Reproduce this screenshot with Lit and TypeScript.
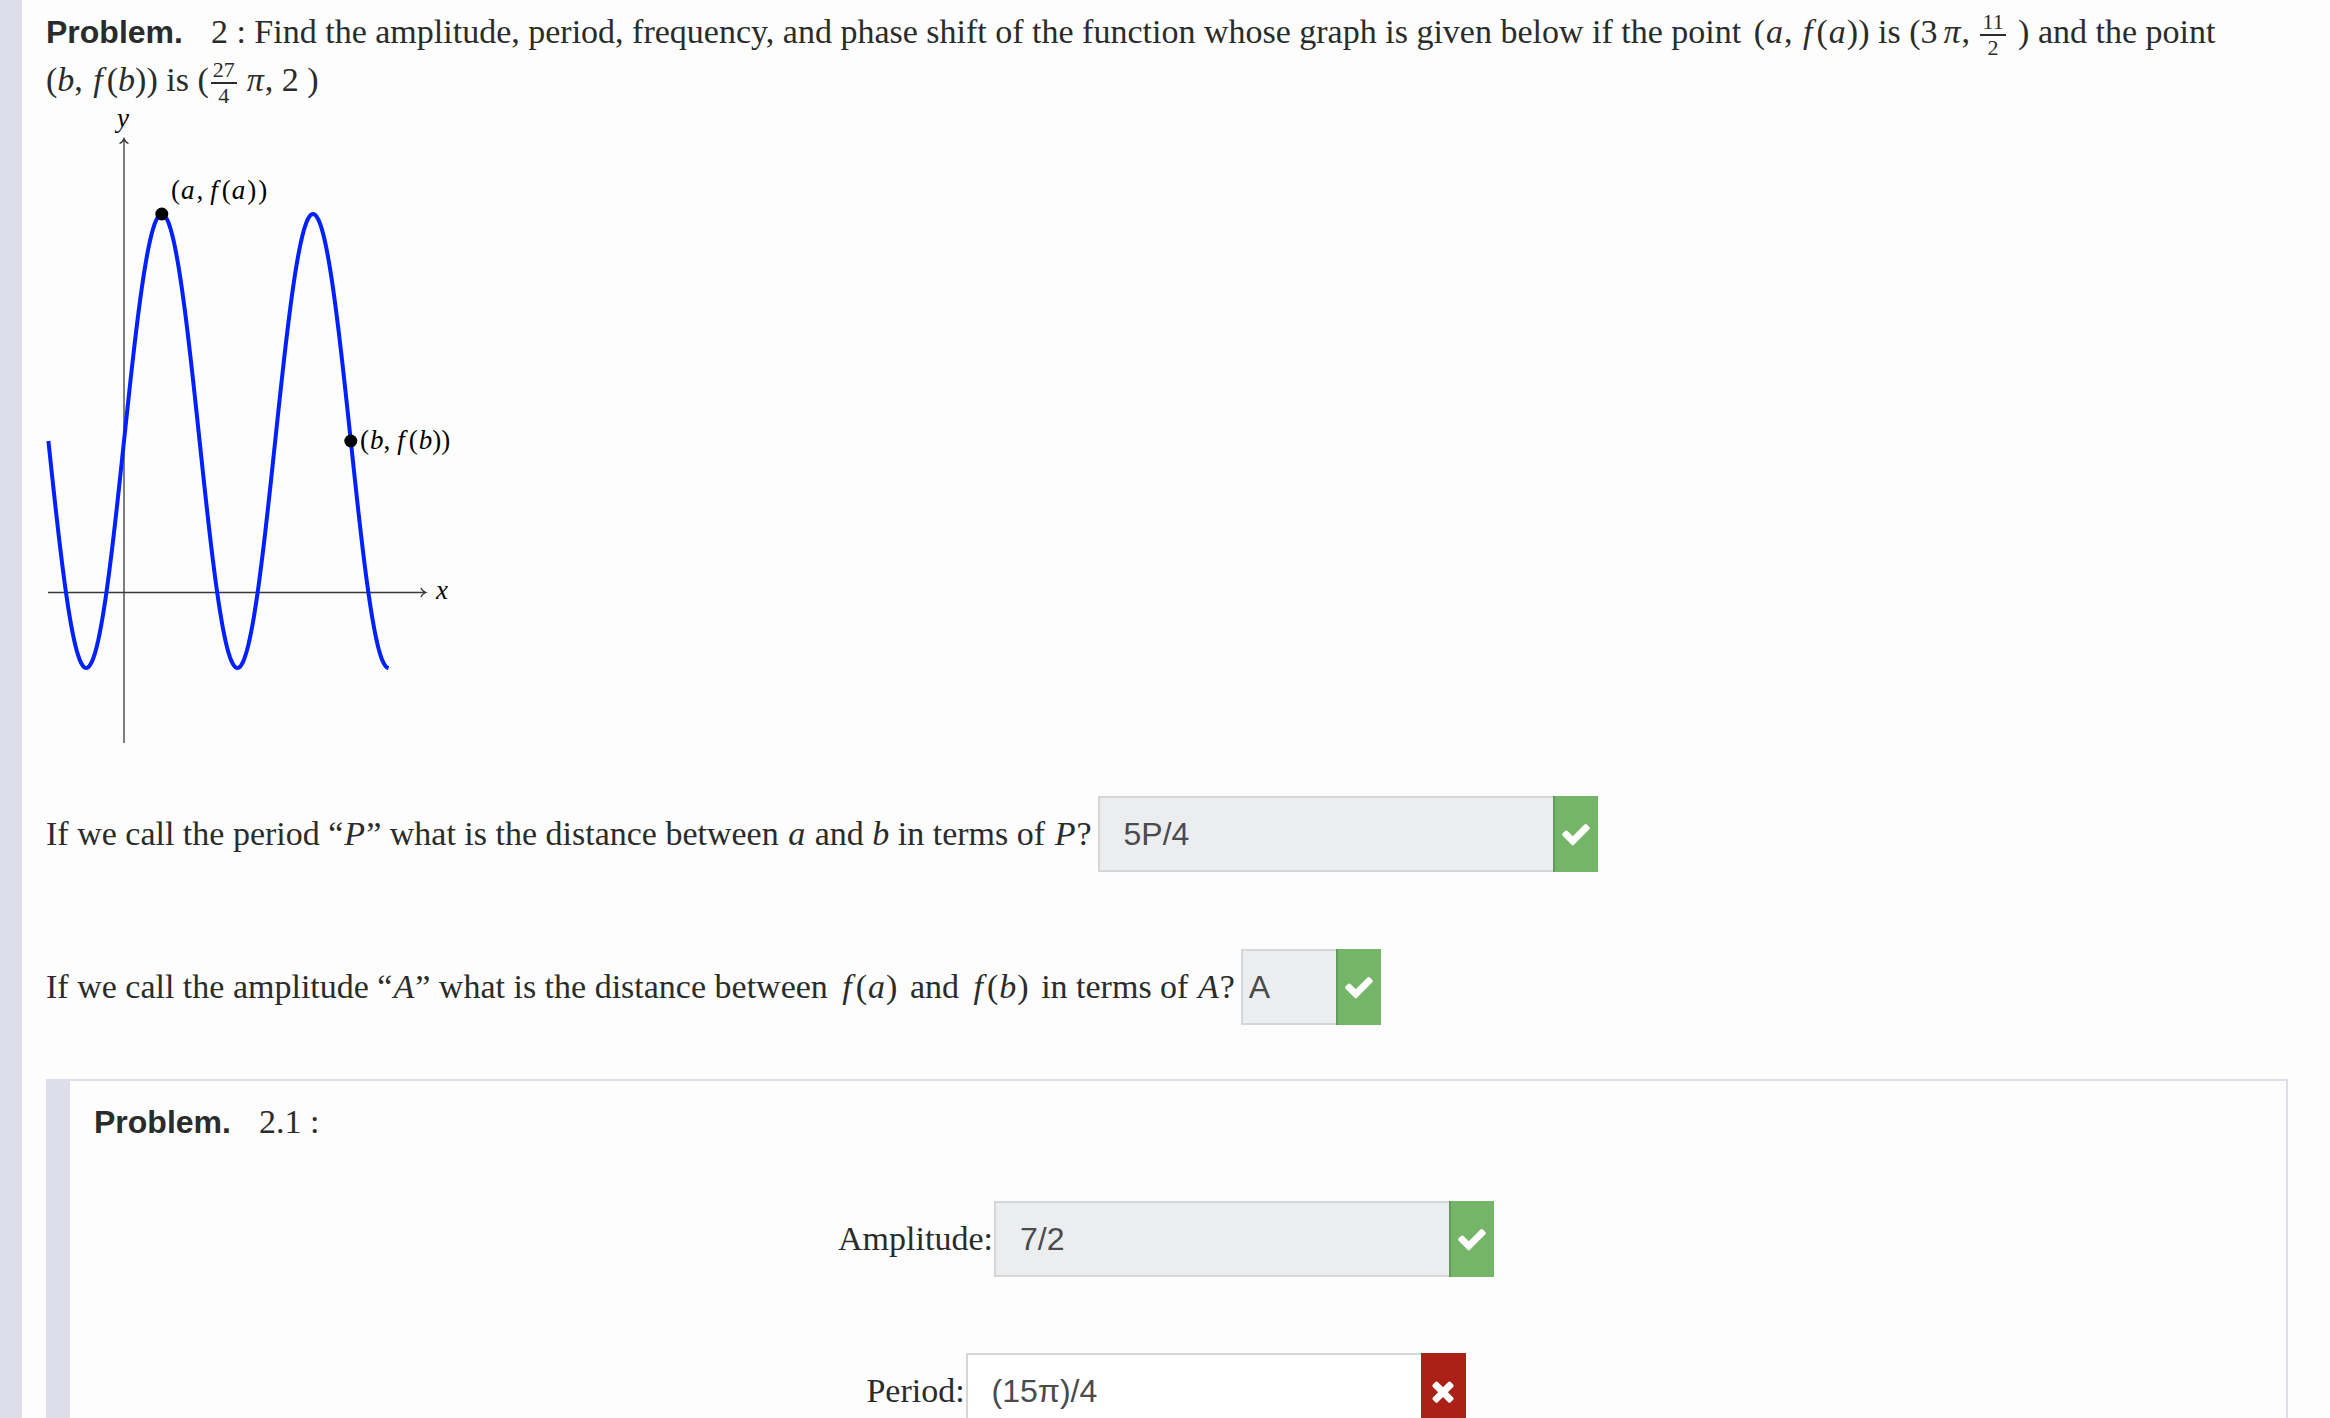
import { LitElement, html, css, svg } from "lit";
import { customElement, property } from "lit/decorators.js";

const CHECK =
  "M1671 566q0 40-28 68l-724 724-136 136q-28 28-68 28t-68-28l-136-136-362-362q-28-28-28-68t28-68l136-136q28-28 68-28t68 28l294 295 656-657q28-28 68-28t68 28l136 136q28 28 28 68z";
const CROSS =
  "M1490 1322q0 40-28 68l-136 136q-28 28-68 28t-68-28l-294-294-294 294q-28 28-68 28t-68-28l-136-136q-28-28-28-68t28-68l294-294-294-294q-28-28-28-68t28-68l136-136q28-28 68-28t68 28l294 294 294-294q28-28 68-28t68 28l136 136q28 28 28 68t-28 68l-294 294 294 294q28 28 28 68z";

/** A text answer with its label and a correct / incorrect mark on the right. */
@customElement("answer-field")
export class AnswerField extends LitElement {
  @property() value = "";
  @property({ type: Boolean }) correct = false;
  @property({ type: Boolean }) short = false;
  @property({ type: Boolean }) tight = false;

  static styles = css`
    :host {
      display: flex;
      align-items: center;
    }
    .label {
      margin-right: 6px;
      white-space: nowrap;
    }
    .label.tight {
      margin-right: 1px;
    }
    .group {
      display: flex;
      height: 76px;
    }
    .box {
      box-sizing: border-box;
      width: 455px;
      height: 76px;
      margin: 0;
      padding: 0 24px;
      border: 2px solid #d5d6d7;
      border-right: 0;
      border-radius: 0;
      background: #fff;
      color: #494b4f;
      font: 32px "Liberation Sans", Arial, sans-serif;
      outline: none;
    }
    .box.locked {
      background: #ecedef;
    }
    .box.short {
      width: 95px;
      padding: 0 6px;
    }
    .mark {
      box-sizing: border-box;
      display: flex;
      align-items: center;
      justify-content: center;
      width: 45px;
      height: 76px;
      padding: 0;
      border: 0;
      background: #ab2117;
    }
    .mark.correct {
      border-left: 2px solid #62995c;
      background: #74b567;
    }
    .icon {
      flex: none;
      width: 32px;
      height: 32px;
      fill: #fff;
    }
  `;

  render() {
    return html`
      <label class="label ${this.tight ? "tight" : ""}" for="answer"><slot></slot></label>
      <div class="group">
        <input
          id="answer"
          type="text"
          class="box ${this.correct ? "locked" : ""} ${this.short ? "short" : ""}"
          .value=${this.value}
          ?readonly=${this.correct}
        />
        <button
          type="button"
          class="mark ${this.correct ? "correct" : ""}"
          aria-label=${this.correct ? "Correct" : "Incorrect"}
        >
          <svg class="icon" viewBox="0 0 1792 1792" aria-hidden="true">
            <path d=${this.correct ? CHECK : CROSS} />
          </svg>
        </button>
      </div>
    `;
  }
}

const PERIOD = 151.2;
const AMPLITUDE = 227;
const MID = 333;
const ORIGIN = 78;

/** Samples the sine wave between two x positions of the drawing. */
function wave(from: number, to: number): string {
  const points: string[] = [];
  const steps = 240;
  for (let i = 0; i <= steps; i++) {
    const x = from + ((to - from) * i) / steps;
    const y = MID - AMPLITUDE * Math.sin((2 * Math.PI * (x - ORIGIN)) / PERIOD);
    points.push(`${x.toFixed(2)},${y.toFixed(2)}`);
  }
  return points.join(" ");
}

@customElement("function-graph")
export class FunctionGraph extends LitElement {
  static styles = css`
    :host {
      display: block;
    }
    .plot {
      display: block;
      width: 420px;
      height: 640px;
      overflow: visible;
    }
    .axis {
      fill: none;
      stroke: #3a3a3a;
      stroke-width: 1.3;
    }
    .curve {
      fill: none;
      stroke: #0020ff;
      stroke-width: 4;
    }
    .name {
      font: italic 27px "Liberation Serif", "Times New Roman", serif;
    }
    .up {
      font-style: normal;
    }
  `;

  private label(v: string, x: number, y: number, gap: number) {
    return svg`<text class="name" x=${x} y=${y}><tspan class="up">(</tspan><tspan dx="1">${v}</tspan><tspan class="up" dx=${gap}>,</tspan><tspan dx="7">f</tspan><tspan class="up" dx="4">(</tspan><tspan dx="1">${v}</tspan><tspan class="up" dx=${gap}>)</tspan><tspan class="up" dx=${gap}>)</tspan></text>`;
  }

  render() {
    return html`
      <svg class="plot" viewBox="0 0 420 640" role="img" aria-label="Graph of f">
        <path class="axis" d="M2 484.5H379M375 480q1 3 5 4.5q-4 1.500-5 4.500" />
        <path class="axis" d="M78 635V32M73.500 35.500q3-1 4.500-5q1.500 4 4.500 5" />
        <polyline class="curve" points=${wave(ORIGIN - PERIOD / 2, ORIGIN + PERIOD * 1.75)} />
        <circle cx=${ORIGIN + PERIOD / 4} cy=${MID - AMPLITUDE} r="6.500" />
        <circle cx=${ORIGIN + PERIOD * 1.5} cy=${MID} r="6.500" />
        <text class="name" x="71" y="19">y</text>
        <text class="name" x="390" y="491">x</text>
        ${this.label("a", 125, 91, 2)} ${this.label("b", 314, 341, 0)}
      </svg>
    `;
  }
}

@customElement("app-root")
export class AppRoot extends LitElement {
  static styles = css`
    :host {
      display: block;
      height: 100vh;
      overflow: hidden;
      background: #fdfdfd;
      color: #2a2c2c;
      font: 34px/48px "Liberation Serif", "Times New Roman", serif;
    }
    .page {
      min-height: 100%;
      box-sizing: border-box;
      border-left: 22px solid #dedeea;
      padding: 8px 42px 0 24px;
    }
    .statement {
      margin: 0;
    }
    .heading {
      margin-right: 28px;
      font: bold 32px "Liberation Sans", Arial, sans-serif;
    }
    .math {
      white-space: nowrap;
    }
    .math.after {
      margin-left: 4px;
    }
    .math.wide {
      margin: 0 4px;
    }
    i {
      margin: 0 1px;
    }
    .plain {
      margin: 0;
    }
    .pi {
      margin-left: 6px;
    }
    .fn {
      margin: 0 4px 0 2px;
    }
    .fraction {
      display: inline-flex;
      flex-direction: column;
      align-items: center;
      width: 26px;
      margin: -16px 12px -16px 10px;
      vertical-align: middle;
      font-size: 22px;
      line-height: 24px;
    }
    .fraction.lead {
      margin-left: 2px;
      margin-right: 4px;
    }
    .over {
      width: 100%;
      border-bottom: 2px solid #2a2c2c;
      text-align: center;
    }
    .graph {
      margin: 4px 0 48px;
    }
    .question {
      margin-bottom: 77px;
    }
    .panel {
      margin-top: -23px;
      border: 2px solid #dedeea;
      border-left-width: 24px;
      padding: 17px 48px 24px 24px;
    }
    .answers {
      display: flex;
      flex-direction: column;
      align-items: center;
      gap: 76px;
      padding-top: 55px;
    }
  `;

  render() {
    return html`
      <main class="page">
        <p class="statement">
          <b class="heading">Problem.</b>2 : Find the amplitude, period, frequency, and phase shift of
          the function whose graph is given below if the point
          <span class="math after">(<i>a</i>, <i class="fn">f</i>(<i>a</i>))</span> is
          <span class="math"
            >(3<i class="pi">π</i>,<span class="fraction"
              ><span class="over">11</span><span>2</span></span
            >)</span
          >
          and the point
          <span class="math">(<i class="plain">b</i>, <i class="fn">f</i>(<i class="plain">b</i>))</span>
          is
          <span class="math"
            >(<span class="fraction lead"><span class="over">27</span><span>4</span></span
            ><i class="pi">π</i>, 2 )</span
          >
        </p>
        <function-graph class="graph"></function-graph>
        <answer-field class="question" value="5P/4" correct>
          If we call the period “<i>P</i>” what is the distance between <i>a</i> and
          <i class="plain">b</i> in terms of <i>P</i>?
        </answer-field>
        <answer-field class="question" value="A" correct short>
          If we call the amplitude “<i>A</i>” what is the distance between
          <span class="math wide"><i class="fn">f</i>(<i>a</i>)</span> and
          <span class="math wide"><i class="fn">f</i>(<i>b</i>)</span> in terms of <i>A</i>?
        </answer-field>
        <section class="panel">
          <p class="statement"><b class="heading">Problem.</b>2.1 :</p>
          <div class="answers">
            <answer-field value="7/2" correct tight>Amplitude:</answer-field>
            <answer-field value="(15π)/4" tight>Period:</answer-field>
          </div>
        </section>
      </main>
    `;
  }
}
